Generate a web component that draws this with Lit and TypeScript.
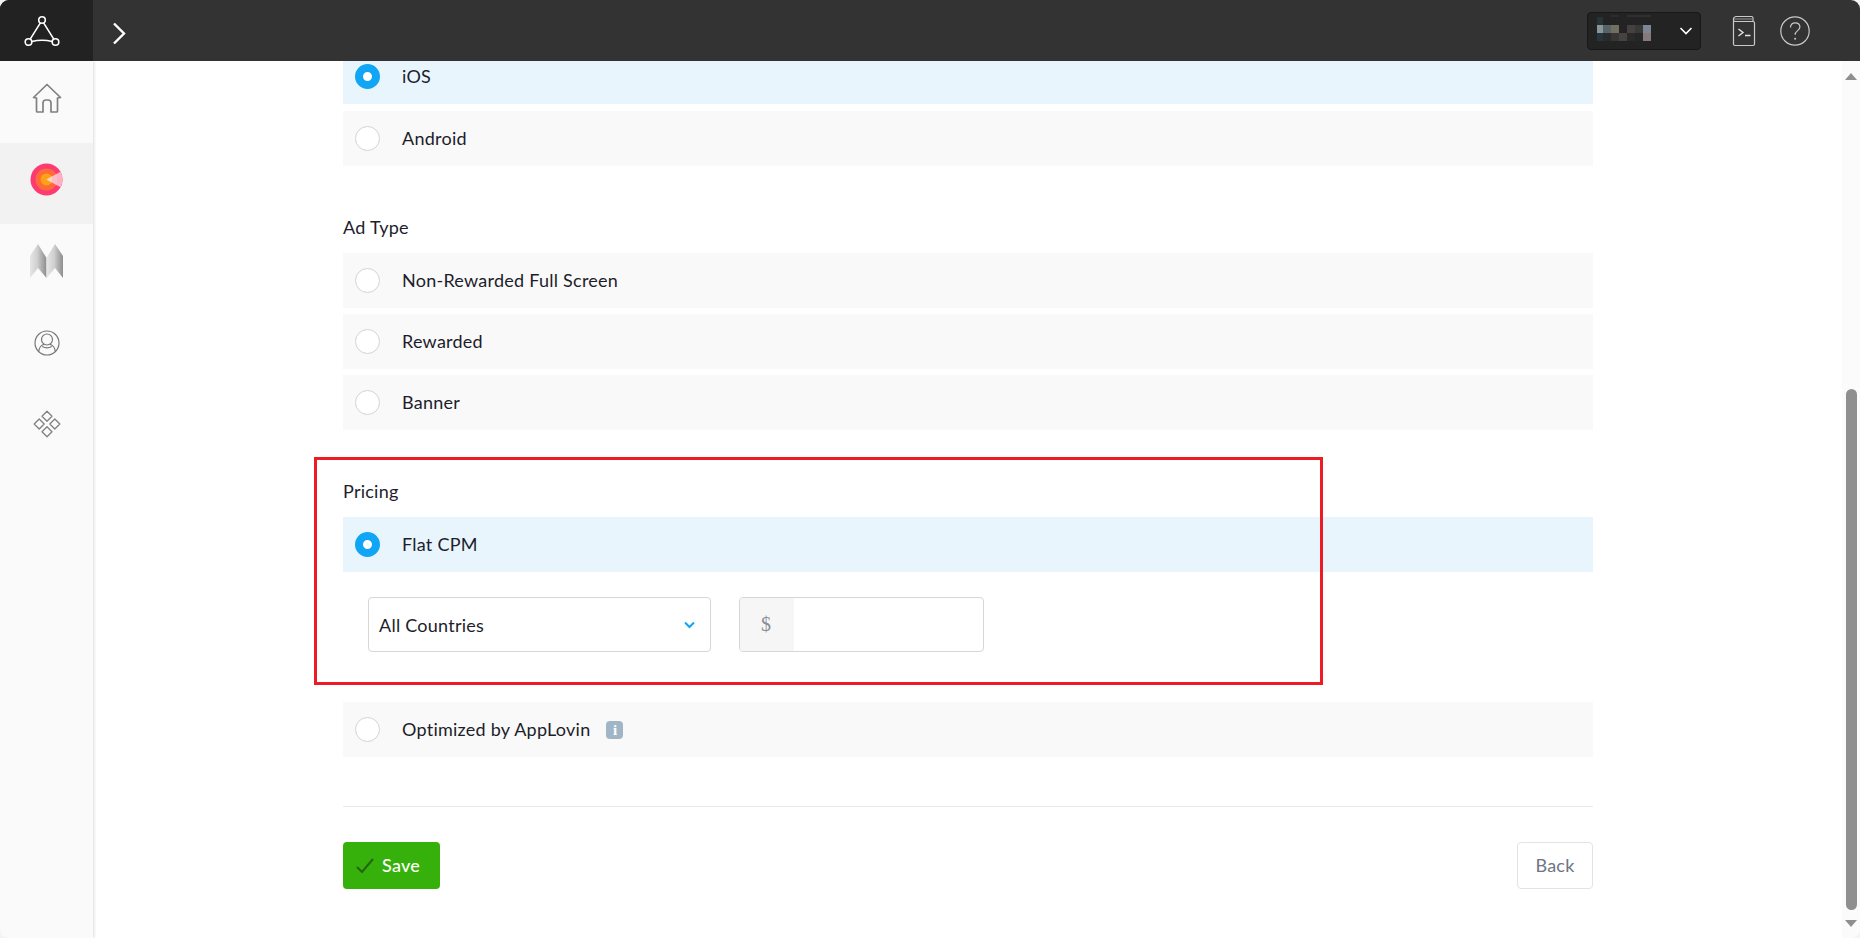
import { LitElement, html, css, svg } from "lit";
import { customElement } from "lit/decorators.js";

const mosaic: [number, number, number, number, string][] = [
  [7, 4, 6, 8, "#26343a"],
  [7, 12, 6, 8, "#8b9699"],
  [7, 20, 6, 8, "#24363f"],
  [13, 12, 8, 8, "#566467"],
  [13, 20, 8, 8, "#2a2b2c"],
  [21, 12, 8, 8, "#716f60"],
  [21, 20, 8, 8, "#383534"],
  [29, 20, 8, 8, "#454240"],
  [37, 12, 8, 8, "#464140"],
  [37, 20, 8, 8, "#2b2a2a"],
  [45, 12, 8, 8, "#383838"],
  [45, 20, 8, 8, "#262626"],
  [53, 12, 8, 8, "#7d8692"],
  [53, 20, 8, 8, "#86797a"],
  [21, 2, 8, 2, "#2c2c2c"],
  [37, 2, 24, 2, "#2f2f2f"],
];

@customElement("app-root")
export class AppRoot extends LitElement {
  static styles = css`
    :host { display: block; width: 1860px; height: 938px; font-family: Lato, "Open Sans", sans-serif; color: #1d1d2b; background: #f4f4f4; }
    .app { position: relative; width: 1860px; height: 938px; border-radius: 9px; overflow: hidden; display: grid; grid-template-rows: 61px 1fr; background: #fff; }
    .topbar { display: flex; align-items: center; background: #333; z-index: 3; }
    .logo { width: 93px; height: 61px; box-sizing: border-box; padding: 1px 9px 0 0; background: #222; display: flex; align-items: center; justify-content: center; }
    .expand { margin-left: 19px; width: 20px; height: 30px; display: block; }
    .spacer { flex: 1; }
    .account { width: 114px; height: 38px; box-sizing: border-box; background: #232323; border: 1px solid #171717; border-radius: 4px; display: flex; align-items: center; justify-content: space-between; padding: 0 7px 0 2px; }
    .mosaic { width: 64px; height: 36px; display: block; }
    .icon-book { margin-left: 31px; width: 24px; height: 32px; display: block; }
    .icon-help { margin-left: 23px; margin-right: 49px; width: 32px; height: 32px; display: block; }
    .body { display: grid; grid-template-columns: 93px 1fr 18px; min-height: 0; }
    .side { background: #fafafa; box-shadow: 1px 0 3px rgba(0,0,0,.14); display: flex; flex-direction: column; z-index: 2; }
    .nav { height: 81.500px; box-sizing: border-box; padding-bottom: 7px; display: flex; align-items: center; justify-content: center; flex: none; }
    .nav.on { background: #f2f2f2; }
    .main { overflow: hidden; min-width: 0; padding: 0 249px 0 250px; }
    .content { margin-top: -12px; display: flex; flex-direction: column; }
    .opt { height: 55px; background: #f9f9f9; display: flex; align-items: center; padding-left: 12px; font-size: 18px; letter-spacing: .25px; margin-bottom: 6px; flex: none; }
    .opt.on { background: #e8f5fd; }
    .opt.first { margin-bottom: 7px; }
    .text { padding-bottom: 2px; }
    .radio { width: 25px; height: 25px; box-sizing: border-box; border-radius: 50%; background: #fff; border: 1px solid #d4d4d4; margin-right: 22px; flex: none; }
    .opt.on .radio { border: 8.500px solid #10a5f5; }
    .label { font-size: 18px; letter-spacing: .25px; line-height: 24px; margin: 43px 0 14px; }
    .fields { display: flex; gap: 28px; padding: 19px 0 0 25px; height: 55px; margin-bottom: 50px; flex: none; }
    .select { width: 343px; box-sizing: border-box; border: 1px solid #d6d6d6; border-radius: 4px; display: flex; align-items: center; justify-content: space-between; padding: 0 15px 0 10px; font-size: 18px; letter-spacing: .25px; }
    .input { width: 245px; box-sizing: border-box; border: 1px solid #d6d6d6; border-radius: 4px; display: flex; overflow: hidden; }
    .addon { width: 54px; padding-right: 2px; box-sizing: border-box; background: #f6f6f6; color: #8a8f98; font-size: 20px; font-family: "Liberation Serif", serif; display: flex; align-items: center; justify-content: center; }
    .info { margin-left: 16px; width: 17px; height: 18px; border-radius: 4px; background: #a0b6c6; color: #fff; font: 700 15px/18px "Liberation Serif", serif; text-align: center; letter-spacing: 0; }
    hr { border: 0; border-top: 1px solid #e8e9ee; margin: 43px 0 35px; width: 100%; }
    .actions { display: flex; justify-content: space-between; }
    .save { width: 97px; height: 47px; box-sizing: border-box; border-radius: 4px; background: #36b10b; color: #fff; display: flex; align-items: center; gap: 8px; padding-left: 13px; font-size: 18px; font-weight: 500; letter-spacing: .25px; }
    .back { width: 76px; height: 47px; box-sizing: border-box; padding-bottom: 2px; border: 1px solid #e2e3e8; border-radius: 4px; color: #6f7585; display: flex; align-items: center; justify-content: center; font-size: 18px; letter-spacing: .25px; }
    .scroll { background: #fbfbfb; display: flex; flex-direction: column; align-items: center; padding: 11px 0 10px; box-sizing: border-box; border-bottom-right-radius: 9px; }
    .arrow { width: 14px; height: 9px; display: block; flex: none; }
    .track { flex: 1; width: 11px; display: flex; flex-direction: column; padding-bottom: 9px; box-sizing: border-box; min-height: 0; }
    .thumb { margin-top: auto; height: 521px; background: #8f8f8f; border-radius: 6px; }
    .marker { position: absolute; left: 314px; top: 457px; width: 1009px; height: 228px; box-sizing: border-box; border: 3px solid #ed1c24; pointer-events: none; z-index: 4; }
  `;

  private opt(label: string, on = false, extra: unknown = "", first = false) {
    return html`<div class="opt ${on ? "on" : ""} ${first ? "first" : ""}"><span class="radio"></span><span class="text">${label}</span>${extra}</div>`;
  }

  render() {
    return html`<div class="app">
      <header class="topbar">
        <div class="logo">
          <svg width="36" height="32" viewBox="0 0 36 32" fill="none" stroke="#fff" stroke-width="1.600">
            <circle cx="18" cy="5" r="3.300"/><circle cx="4.500" cy="27" r="3.300"/><circle cx="31.500" cy="27" r="3.300"/>
            <path d="M16.400 7.800 6.200 24.200M19.600 7.800l10.200 16.400M7.800 26.500c6-1.500 14.400-1.500 20.400 0"/>
          </svg>
        </div>
        <svg class="expand" viewBox="0 0 20 30" fill="none" stroke="#fff" stroke-width="2.400"><path d="M2 7.500l10 10-10 10"/></svg>
        <div class="spacer"></div>
        <div class="account">
          <svg class="mosaic" viewBox="0 0 64 36" shape-rendering="crispEdges">
            ${mosaic.map(([x, y, w, h, c]) => svg`<rect x=${x} y=${y} width=${w} height=${h} fill=${c}/>`)}
          </svg>
          <svg width="14" height="10" viewBox="0 0 14 10" fill="none" stroke="#fff" stroke-width="1.600"><path d="M1.500 2l5.500 5.500L12.500 2"/></svg>
        </div>
        <svg class="icon-book" viewBox="0 0 24 32" fill="none" stroke="#c9c9c9" stroke-width="1.200">
          <path d="M1.500 5.500V29a1.500 1.500 0 0 0 1.500 1.500h18a1.500 1.500 0 0 0 1.500-1.500V8a1.500 1.500 0 0 0-1.500-1.500H3A1.600 1.600 0 0 1 1.500 5 3 3 0 0 1 4 1.500h15.500a1.500 1.500 0 0 1 1.500 1.500v3.500"/>
          <path d="M2 4h18" stroke="#888"/>
          <path d="M6.500 14l4.500 3.500-4.500 3.500M13 20.500h5.500" stroke="#e4e4e4" stroke-width="1.400"/>
        </svg>
        <svg class="icon-help" viewBox="0 0 32 32" fill="none" stroke="#c9c9c9" stroke-width="1.200">
          <circle cx="16" cy="16" r="14.200"/>
          <path d="M11.500 12.500c0-3 2-4.700 4.700-4.700 2.800 0 4.700 1.700 4.700 4.200 0 3.700-4.800 3.600-4.800 7.800"/>
          <circle cx="16.100" cy="23.700" r="1" fill="#c9c9c9" stroke="none"/>
        </svg>
      </header>
      <div class="body">
        <nav class="side">
          <div class="nav">
            <svg width="32" height="32" viewBox="0 0 32 32" fill="none" stroke="#808080" stroke-width="1.700" stroke-linejoin="round">
              <path d="M2.500 15.500 16 2.500l13.500 13-3 .5v13a1 1 0 0 1-1 1h-5.500V21a3 3 0 0 0-3-3h-2a3 3 0 0 0-3 3v9H6.500a1 1 0 0 1-1-1V16z"/>
            </svg>
          </div>
          <div class="nav on">
            <svg width="33" height="33" viewBox="0 0 33 33">
              <circle cx="16.500" cy="16.500" r="16" fill="#fd3b72"/>
              <circle cx="16.500" cy="16.500" r="11" fill="#fe6a38"/>
              <circle cx="16.500" cy="16.500" r="6" fill="#fea116"/>
              <path d="M16.500 16.500 30.500 8.800a16 16 0 0 1 0 15.400z" fill="#fcb2c6"/>
              <path d="M16.500 16.500 27 11l0 11z" fill="#ffbdc4"/>
              <path d="M16.500 16.500 22 13.500l0 6z" fill="#fdd7b5"/>
            </svg>
          </div>
          <div class="nav">
            <svg width="33" height="34" viewBox="0 0 33 34">
              <defs>
                <linearGradient id="f1" x1="0" x2="1" y1="0" y2="0"><stop offset="0" stop-color="#e6e6e6"/><stop offset="1" stop-color="#cdcdcd"/></linearGradient>
                <linearGradient id="f2" x1="0" x2="1" y1="0" y2="0"><stop offset="0" stop-color="#c8c8c8"/><stop offset="1" stop-color="#8d8d8d"/></linearGradient>
              </defs>
              <path d="M0 12 8 0v24L0 34z" fill="url(#f1)"/>
              <path d="M8 0l8.500 14V34L8 24z" fill="url(#f2)"/>
              <path d="M16.500 14 25 0v24l-8.500 10z" fill="url(#f1)"/>
              <path d="M25 0l8 12v22l-8-10z" fill="url(#f2)"/>
            </svg>
          </div>
          <div class="nav">
            <svg width="26" height="26" viewBox="0 0 26 26" fill="none" stroke="#777" stroke-width="1.200">
              <circle cx="13" cy="13" r="12"/>
              <circle cx="13" cy="9.500" r="5.500"/>
              <path d="M4.800 21.500c.1-3.600 2.500-6.500 5.200-7.200M21.200 21.500c-.1-3.600-2.500-6.500-5.200-7.200M8.200 16.500c2.800 1.500 6.800 1.500 9.600 0"/>
            </svg>
          </div>
          <div class="nav">
            <svg width="28" height="28" viewBox="0 0 28 28" fill="none" stroke="#808080" stroke-width="1.300" stroke-linejoin="round">
              <path d="M14 1.200 19 6.200 14 11.200 9 6.200zM6.200 9 11.200 14 6.200 19 1.200 14zM21.800 9 26.800 14 21.800 19 16.800 14zM14 16.800 19 21.800 14 26.800 9 21.800z"/>
            </svg>
          </div>
        </nav>
        <main class="main">
          <div class="content">
            ${this.opt("iOS", true, "", true)}
            ${this.opt("Android")}
            <div class="label">Ad Type</div>
            ${this.opt("Non-Rewarded Full Screen")}
            ${this.opt("Rewarded")}
            ${this.opt("Banner")}
            <div class="label">Pricing</div>
            ${this.opt("Flat CPM", true)}
            <div class="fields">
              <div class="select"><span>All Countries</span>
                <svg width="11" height="8" viewBox="0 0 11 8" fill="none" stroke="#10a5f5" stroke-width="2"><path d="M1 1.500l4.500 4.500L10 1.500"/></svg>
              </div>
              <div class="input"><span class="addon">$</span></div>
            </div>
            ${this.opt("Optimized by AppLovin", false, html`<span class="info">i</span>`)}
            <hr />
            <div class="actions">
              <div class="save">
                <svg width="18" height="16" viewBox="0 0 18 16" fill="none" stroke="#23650f" stroke-width="2"><path d="M1 9l5 5L17 1"/></svg>
                <span class="text">Save</span>
              </div>
              <div class="back">Back</div>
            </div>
          </div>
        </main>
        <aside class="scroll">
          <svg class="arrow" viewBox="0 0 14 9"><path d="M7 1l6 7H1z" fill="#8f8f8f"/></svg>
          <div class="track"><div class="thumb"></div></div>
          <svg class="arrow" viewBox="0 0 14 9"><path d="M7 8 1 1h12z" fill="#8f8f8f"/></svg>
        </aside>
      </div>
      <div class="marker"></div>
    </div>`;
  }
}
